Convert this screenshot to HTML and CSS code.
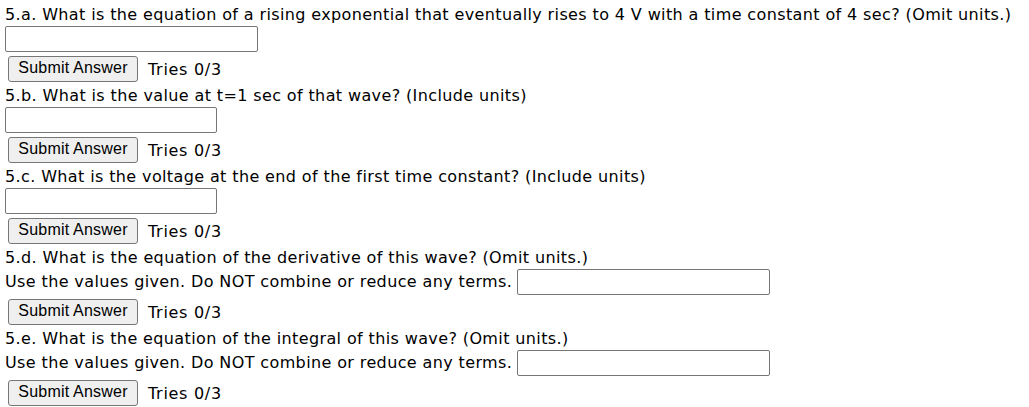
FILE: index.html
```html
<!DOCTYPE html>
<html>
<head>
<meta charset="utf-8">
<link rel="stylesheet" href="styles.css">
</head>
<body>
<div class="q">
  <div class="qtext">5.a. What is the equation of a rising exponential that eventually rises to 4 V with a time constant of 4 sec? (Omit units.)</div>
  <div class="answer"><input class="field wide" type="text"></div>
  <div class="actions"><button class="submit">Submit Answer</button><span class="tries">Tries 0/3</span></div>
</div>
<div class="q">
  <div class="qtext">5.b. What is the value at t=1 sec of that wave? (Include units)</div>
  <div class="answer"><input class="field narrow" type="text"></div>
  <div class="actions"><button class="submit">Submit Answer</button><span class="tries">Tries 0/3</span></div>
</div>
<div class="q">
  <div class="qtext">5.c. What is the voltage at the end of the first time constant? (Include units)</div>
  <div class="answer"><input class="field narrow" type="text"></div>
  <div class="actions"><button class="submit">Submit Answer</button><span class="tries">Tries 0/3</span></div>
</div>
<div class="q">
  <div class="qtext">5.d. What is the equation of the derivative of this wave? (Omit units.)</div>
  <div class="answer"><span class="hint">Use the values given. Do NOT combine or reduce any terms.</span><input class="field wide" type="text"></div>
  <div class="actions"><button class="submit">Submit Answer</button><span class="tries">Tries 0/3</span></div>
</div>
<div class="q">
  <div class="qtext">5.e. What is the equation of the integral of this wave? (Omit units.)</div>
  <div class="answer"><span class="hint">Use the values given. Do NOT combine or reduce any terms.</span><input class="field wide" type="text"></div>
  <div class="actions"><button class="submit">Submit Answer</button><span class="tries">Tries 0/3</span></div>
</div>
</body>
</html>
```
FILE: styles.css
```css
html, body {
  margin: 0;
  padding: 0;
  background: #ffffff;
}
body {
  padding: 5px 5px 0 5px;
  font-family: "DejaVu Sans", Verdana, sans-serif;
  font-size: 16px;
  letter-spacing: 0.38px;
  color: #000000;
}
.q {
  height: 81px;
}
.qtext {
  height: 20px;
  line-height: 20px;
  white-space: nowrap;
}
.answer {
  display: flex;
  align-items: center;
  margin-top: 1px;
  height: 26px;
}
.hint {
  line-height: 20px;
  white-space: nowrap;
  margin-right: 5px;
}
.field {
  box-sizing: border-box;
  height: 26px;
  margin: 0;
  padding: 0 4px;
  border: 1px solid #767676;
  border-radius: 2px;
  background: #ffffff;
  font-family: "DejaVu Sans", Verdana, sans-serif;
  font-size: 16px;
}
.wide { width: 253px; }
.narrow { width: 212px; }
.actions {
  display: flex;
  align-items: flex-start;
  margin-top: 4px;
  height: 26px;
}
.submit {
  box-sizing: border-box;
  width: 130px;
  height: 26px;
  margin: 0 0 0 3px;
  padding: 0 0 2px 0;
  border: 1px solid #767676;
  border-radius: 3px;
  background: #efefef;
  color: #000000;
  font-family: "Liberation Sans", Arial, sans-serif;
  font-size: 16px;
  letter-spacing: 0.2px;
}
.tries {
  margin-left: 10px;
  margin-top: 4px;
  line-height: 20px;
  letter-spacing: 0.7px;
  white-space: nowrap;
}
```
